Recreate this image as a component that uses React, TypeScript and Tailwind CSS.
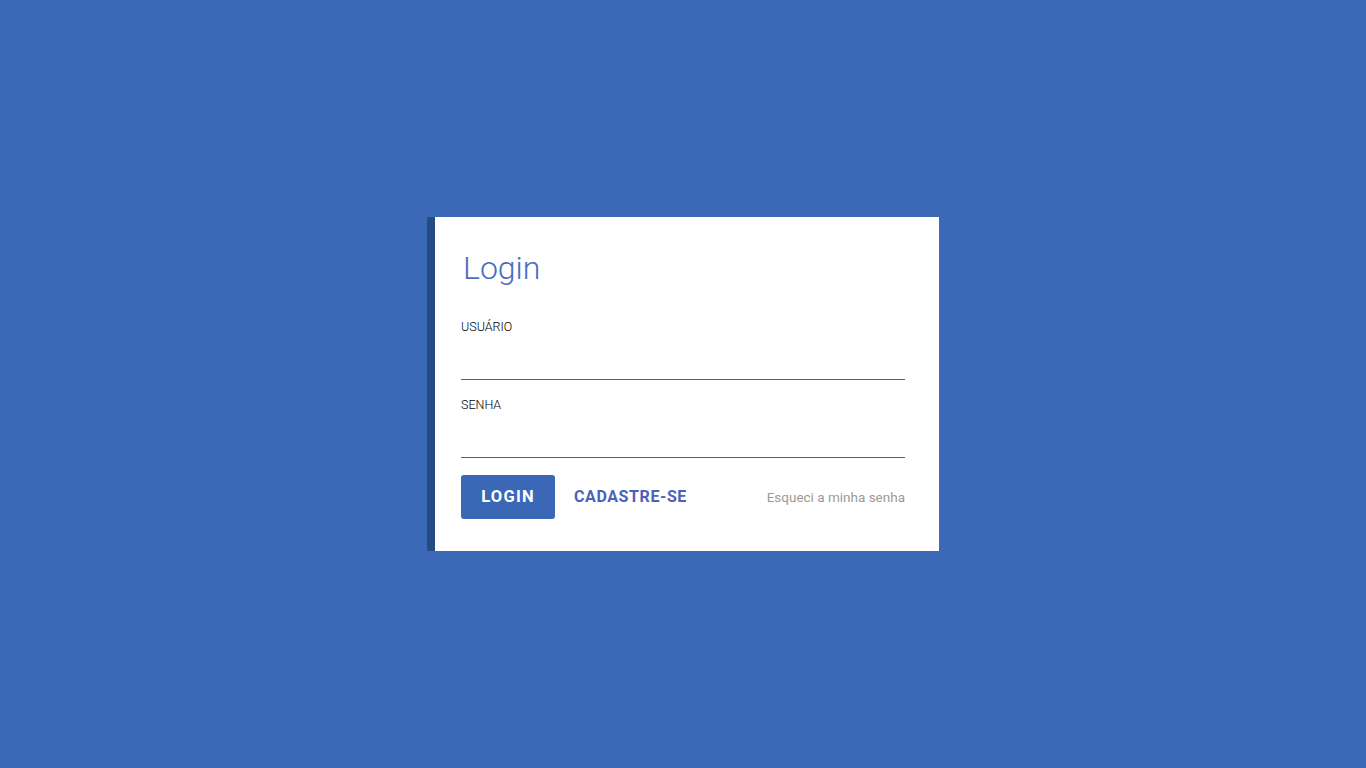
import { useState } from "react";

const LoginCard = () => {
	const [user, setUser] = useState("");
	const [pass, setPass] = useState("");

	return (
		<form
			className="w-[512px] bg-white border-l-8 border-[#284a82] pl-[26px] pr-[34px] pt-[35px] pb-[32px]"
			onSubmit={(e) => e.preventDefault()}
		>
			<h1 className="text-[32px] leading-[32px] font-light text-[#4a6cc2] pl-[2px]">Login</h1>

			<label className="block mt-[37px] text-[12.5px] leading-[12px] font-light text-black">USUÁRIO</label>
			<input
				className="block w-full h-[47px] border-b border-[#4a5f8f] outline-none text-[14px] text-[#222]"
				value={user}
				onChange={(e) => setUser(e.target.value)}
			/>

			<label className="block mt-[19px] text-[12.5px] leading-[12px] font-light text-black">SENHA</label>
			<input
				type="password"
				className="block w-full h-[47px] border-b border-[#4a5f8f] outline-none text-[14px] text-[#222]"
				value={pass}
				onChange={(e) => setPass(e.target.value)}
			/>

			<div className="flex items-center mt-[17px]">
				<button
					type="submit"
					className="w-[94px] h-[44px] rounded-[3px] bg-[#3a67b6] text-white font-bold text-[16.5px] tracking-[1.2px] flex items-center justify-center"
				>
					LOGIN
				</button>
				<button
					type="button"
					className="ml-[19px] text-[#4a62b8] font-bold text-[16px] tracking-[0.6px]"
				>
					CADASTRE-SE
				</button>
				<a href="#" className="ml-auto text-[13.5px] text-[#9a9a9a]">
					Esqueci a minha senha
				</a>
			</div>
		</form>
	);
};

export default function App() {
	return (
		<div
			className="h-screen w-full bg-[#3b68b7] flex items-center justify-center"
			style={{ fontFamily: "Roboto, 'Liberation Sans', sans-serif" }}
		>
			<LoginCard />
		</div>
	);
}
